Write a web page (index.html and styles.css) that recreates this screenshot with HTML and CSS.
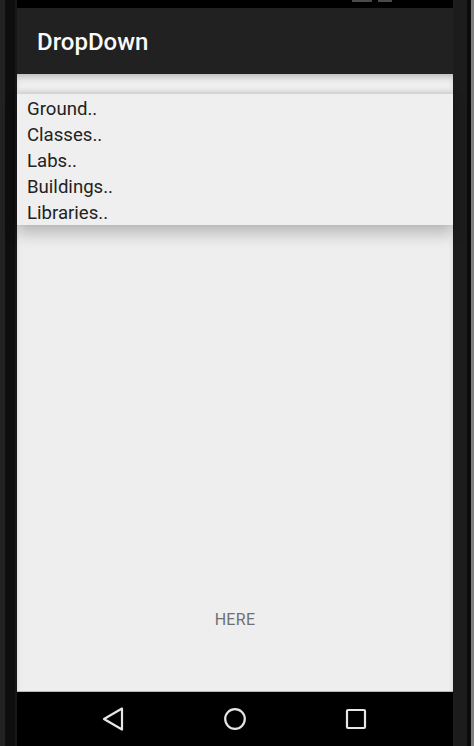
FILE: index.html
```html
<!DOCTYPE html>
<html>
<head>
<meta charset="utf-8">
<link rel="stylesheet" href="styles.css">
</head>
<body>
<div class="device">
  <div class="bezel-left"></div>
  <div class="screen">
    <div class="status">
      <span class="sicon sicon-a"></span>
      <span class="sicon sicon-b"></span>
    </div>
    <div class="appbar"><span class="title">DropDown</span></div>
    <div class="content">
      <ul class="dropdown">
        <li>Ground..</li>
        <li>Classes..</li>
        <li>Labs..</li>
        <li>Buildings..</li>
        <li>Libraries..</li>
      </ul>
      <div class="spacer"></div>
      <div class="button">HERE</div>
    </div>
    <div class="navbar">
      <svg class="nav-icon" width="24" height="26" viewBox="0 0 24 26"><path d="M21 2.5 L3 13 L21 23.5 Z" fill="none" stroke="#e6e6e6" stroke-width="2.2" stroke-linejoin="round"/></svg>
      <svg class="nav-icon" width="24" height="24" viewBox="0 0 24 24"><circle cx="12" cy="12" r="9.8" fill="none" stroke="#e6e6e6" stroke-width="2.2"/></svg>
      <svg class="nav-icon" width="22" height="22" viewBox="0 0 22 22"><rect x="2" y="2" width="18" height="18" rx="1" fill="none" stroke="#e6e6e6" stroke-width="2.2"/></svg>
    </div>
  </div>
  <div class="bezel-right"></div>
</div>
</body>
</html>
```

FILE: styles.css
```css
html, body {
  margin: 0;
  padding: 0;
  background: #1a1a1a;
}
.device {
  display: flex;
  width: 474px;
  height: 746px;
  font-family: Roboto, "Noto Sans", sans-serif;
}
.bezel-left {
  width: 17px;
  background: linear-gradient(to right, #222 0, #222 5px, #0e0e0e 5px, #0e0e0e 15px, #181818 15px);
}
.bezel-right {
  width: 21px;
  background: linear-gradient(to right, #1c1c1c 0, #1c1c1c 14px, #0a0a0a 14px, #0a0a0a 18px, #808080 18px);
}
.screen {
  width: 436px;
  display: flex;
  flex-direction: column;
  background: #eeeeee;
}
.status {
  height: 8px;
  background: #000;
  position: relative;
}
.sicon {
  position: absolute;
  top: 0;
  height: 2px;
  background: #4a4a4a;
}
.sicon-a { left: 335px; width: 20px; }
.sicon-b { left: 361px; width: 14px; }
.appbar {
  height: 66px;
  background: #212121;
  display: flex;
  align-items: center;
  padding-left: 20px;
  position: relative;
  z-index: 2;
}
.title {
  color: #fafafa;
  font-size: 24px;
  font-weight: 500;
  margin-top: 2px;
}
.content {
  flex: 1;
  display: flex;
  flex-direction: column;
  background: #eeeeee;
  box-shadow: inset 0 5px 6px -2px rgba(0,0,0,0.22);
  position: relative;
}
.dropdown {
  list-style: none;
  margin: 20px 0 0 0;
  padding: 1px 0 0 10px;
  background: #efefef;
  box-shadow: 0 -2px 5px rgba(0,0,0,0.14), 0 9px 14px rgba(0,0,0,0.22);
  position: relative;
  z-index: 1;
}
.dropdown li {
  height: 26px;
  line-height: 28px;
  font-size: 18.6px;
  color: #222;
}
.spacer {
  flex: 1;
}
.button {
  height: 36px;
  line-height: 36px;
  text-align: center;
  font-size: 16px;
  font-weight: 400;
  letter-spacing: 0.3px;
  color: #707070;
  margin-bottom: 53px;
}
.navbar {
  height: 55px;
  background: #000;
  border-top: 1px solid #b8b8b8;
  box-sizing: border-box;
  display: flex;
  align-items: center;
  justify-content: space-between;
  padding: 0 86px 0 84px;
}
.nav-icon {
  display: block;
}
```
